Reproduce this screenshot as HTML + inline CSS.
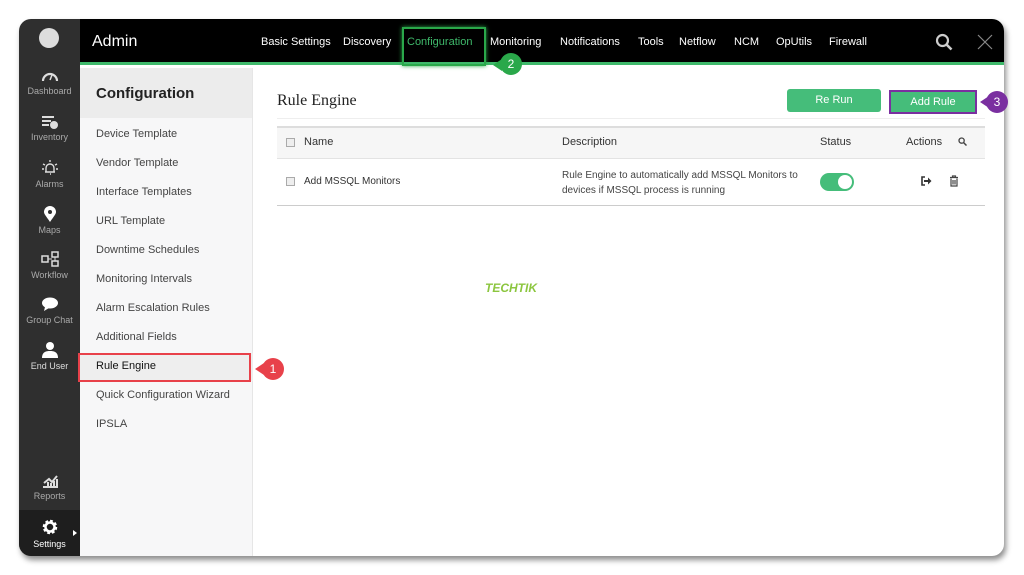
<!DOCTYPE html>
<html><head><style>
*{margin:0;padding:0;box-sizing:border-box}
body{width:1024px;height:575px;background:#fff;font-family:"Liberation Sans",sans-serif;position:relative;overflow:hidden}
.frame{position:absolute;left:19px;top:19px;width:985px;height:537px;border-radius:12px;overflow:hidden;box-shadow:2px 4px 6px rgba(0,0,0,.45);background:#fff}
.side{position:absolute;left:0;top:0;width:61px;height:537px;background:#2f2f2f}
.top{position:absolute;left:61px;top:0;right:0;height:46px;background:#000;border-bottom:3px solid #3fb96b}
.sitem{position:absolute;left:0;width:61px;text-align:center;color:#aaa;font-size:9px}
.sitem svg{display:block;margin:0 auto 3px}
.cfg{position:absolute;left:61px;top:49px;width:173px;bottom:0;background:#f7f7f8;border-right:1px solid #e6e6e6}
.cfgh{height:50px;background:#ececec;font-size:15px;font-weight:bold;color:#222;padding:17px 0 0 16px}
.cfg div.i{position:absolute;left:16px;font-size:11px;color:#444}
.nav{position:absolute;top:17px;font-size:11px;color:#fff}
</style></head><body>
<div class="frame">
 <div class="side">
  <div style="position:absolute;left:20px;top:9px;width:20px;height:20px;border-radius:50%;background:#ddd"></div>
  <div class="sitem" style="top:50px"><svg width="18" height="14" viewBox="0 0 18 14"><path d="M2 12A7 7 0 1 1 16 12" fill="none" stroke="#ddd" stroke-width="2.2"/><path d="M9 11L11 6" stroke="#ddd" stroke-width="1.5"/></svg>Dashboard</div>
  <div class="sitem" style="top:96px"><svg width="18" height="14" viewBox="0 0 18 14"><path d="M1 2H13M1 6H10M1 10H8" stroke="#ddd" stroke-width="2"/><circle cx="13" cy="10" r="4" fill="#ddd"/></svg>Inventory</div>
  <div class="sitem" style="top:141px"><svg width="18" height="16" viewBox="0 0 18 16"><path d="M5 12V8A4 4 0 0 1 13 8V12H4M14 12H4M9 14h1M2 4l2 1M16 4l-2 1M9 0v2M1 9h2M15 9h2" stroke="#ddd" stroke-width="1.4" fill="none"/></svg>Alarms</div>
  <div class="sitem" style="top:187px"><svg width="14" height="16" viewBox="0 0 14 16"><path d="M7 16C3 10 1 8 1 6A6 6 0 0 1 13 6C13 8 11 10 7 16Z" fill="#fff"/><circle cx="7" cy="6" r="2" fill="#2f2f2f"/></svg>Maps</div>
  <div class="sitem" style="top:232px"><svg width="18" height="16" viewBox="0 0 18 16"><rect x="1" y="5" width="6" height="6" fill="none" stroke="#ddd" stroke-width="1.5"/><rect x="11" y="1" width="6" height="5" fill="none" stroke="#ddd" stroke-width="1.5"/><rect x="11" y="10" width="6" height="5" fill="none" stroke="#ddd" stroke-width="1.5"/><path d="M7 8H11M14 6V10" stroke="#ddd"/></svg>Workflow</div>
  <div class="sitem" style="top:278px"><svg width="18" height="15" viewBox="0 0 18 15"><ellipse cx="9" cy="6" rx="8" ry="5.5" fill="#fff"/><path d="M4 10L3 14L8 11Z" fill="#fff"/></svg>Group Chat</div>
  <div class="sitem" style="top:323px;color:#ddd"><svg width="16" height="16" viewBox="0 0 16 16"><circle cx="8" cy="4" r="4" fill="#fff"/><path d="M0 16C0 10 4 9 8 9S16 10 16 16Z" fill="#fff"/></svg>End User</div>
  <div class="sitem" style="top:454px"><svg width="18" height="15" viewBox="0 0 18 15"><path d="M2 14H17M3 10L8 6L11 9L16 3" stroke="#ddd" stroke-width="2" fill="none"/><path d="M7 14V9M10 14V10M13 14V8M16 14V6" stroke="#ddd" stroke-width="2"/></svg>Reports</div>
  <div style="position:absolute;left:0;top:491px;width:61px;height:46px;background:#1e1e1e"></div>
  <div class="sitem" style="top:499px;color:#fff"><svg width="18" height="18" viewBox="0 0 18 18"><circle cx="9" cy="9" r="5.5" fill="none" stroke="#fff" stroke-width="3.5" stroke-dasharray="2.5 1.8"/><circle cx="9" cy="9" r="4.5" fill="none" stroke="#fff" stroke-width="2.5"/></svg>Settings</div>
  <div style="position:absolute;left:54px;top:511px;border-left:4px solid #fff;border-top:3px solid transparent;border-bottom:3px solid transparent"></div>
 </div>
 <div class="top">
  <div style="position:absolute;left:12px;top:14px;color:#fff;font-size:16px">Admin</div>
  <div class="nav" style="left:181px">Basic Settings</div>
  <div class="nav" style="left:263px">Discovery</div>
  <div class="nav" style="left:327px;color:#3fb96b">Configuration</div>
  <div class="nav" style="left:410px">Monitoring</div>
  <div class="nav" style="left:480px">Notifications</div>
  <div class="nav" style="left:558px">Tools</div>
  <div class="nav" style="left:599px">Netflow</div>
  <div class="nav" style="left:654px">NCM</div>
  <div class="nav" style="left:696px">OpUtils</div>
  <div class="nav" style="left:749px">Firewall</div>
  <svg style="position:absolute;left:855px;top:14px" width="18" height="18" viewBox="0 0 18 18"><circle cx="7.5" cy="7.5" r="5.5" fill="none" stroke="#ccc" stroke-width="2.2"/><path d="M11.5 11.5L16.5 16.5" stroke="#ccc" stroke-width="2.6"/></svg>
  <svg style="position:absolute;left:897px;top:15px" width="16" height="16" viewBox="0 0 16 16"><path d="M1 1L15 15M15 1L1 15" stroke="#888" stroke-width="1.2"/></svg>
 </div>
 <div class="cfg">
  <div class="cfgh">Configuration</div>
  <div class="i" style="top:60px">Device Template</div>
  <div class="i" style="top:89px">Vendor Template</div>
  <div class="i" style="top:118px">Interface Templates</div>
  <div class="i" style="top:147px">URL Template</div>
  <div class="i" style="top:176px">Downtime Schedules</div>
  <div class="i" style="top:205px">Monitoring Intervals</div>
  <div class="i" style="top:234px">Alarm Escalation Rules</div>
  <div class="i" style="top:263px">Additional Fields</div>
  <div style="position:absolute;left:0;top:285px;width:173px;height:28px;background:#eee"></div>
  <div class="i" style="top:292px;color:#111">Rule Engine</div>
  <div class="i" style="top:321px">Quick Configuration Wizard</div>
  <div class="i" style="top:350px">IPSLA</div>
 </div>
 <div style="position:absolute;left:258px;top:73px;font-family:'Liberation Serif',serif;font-size:16px;color:#222">Rule Engine</div>
 <div style="position:absolute;left:768px;top:70px;width:94px;height:23px;background:#45bd7a;border-radius:3px;color:#fff;font-size:11px;text-align:center;line-height:23px">Re Run</div>
 <div style="position:absolute;left:870px;top:71px;width:88px;height:24px;background:#45bd7a;color:#fff;font-size:11px;text-align:center;line-height:20px;border:2px solid #7a2fa0">Add Rule</div>
 <div style="position:absolute;left:258px;top:99px;width:708px;border-top:1px solid #eee"></div>
 <div style="position:absolute;left:258px;top:107px;width:708px;height:33px;background:#f6f6f6;border-top:2px solid #ddd;border-bottom:1px solid #e3e3e3"></div>
 <div style="position:absolute;left:267px;top:119px;width:9px;height:9px;border:1px solid #aaa;background:#eee"></div>
 <div style="position:absolute;left:285px;top:117px;font-size:11px;color:#333">Name</div>
 <div style="position:absolute;left:543px;top:117px;font-size:11px;color:#333">Description</div>
 <div style="position:absolute;left:801px;top:117px;font-size:11px;color:#333">Status</div>
 <div style="position:absolute;left:887px;top:117px;font-size:11px;color:#333">Actions</div>
 <svg style="position:absolute;left:939px;top:118px" width="9" height="9" viewBox="0 0 9 9"><circle cx="3.6" cy="3.6" r="2.6" fill="none" stroke="#444" stroke-width="1.3"/><path d="M5.5 5.5L8.5 8.5" stroke="#444" stroke-width="1.5"/></svg>
 <div style="position:absolute;left:267px;top:158px;width:9px;height:9px;border:1px solid #aaa;background:#eee"></div>
 <div style="position:absolute;left:285px;top:157px;font-size:10px;color:#333">Add MSSQL Monitors</div>
 <div style="position:absolute;left:543px;top:149px;font-size:10px;color:#444;line-height:15px;width:240px">Rule Engine to automatically add MSSQL Monitors to devices if MSSQL process is running</div>
 <div style="position:absolute;left:801px;top:154px;width:34px;height:18px;border-radius:9px;background:#45bd7a"><div style="position:absolute;right:2px;top:2px;width:14px;height:14px;border-radius:50%;background:#fff"></div></div>
 <svg style="position:absolute;left:902px;top:157px" width="11" height="10" viewBox="0 0 11 10"><path d="M4 1H1V9H4" fill="none" stroke="#333" stroke-width="1.6"/><path d="M3 4H7V1.5L10.5 5L7 8.5V6H3Z" fill="#333"/></svg>
 <svg style="position:absolute;left:930px;top:156px" width="10" height="12" viewBox="0 0 10 12"><path d="M1 2.5H9M3.5 2.5V1H6.5V2.5M2 3.5V11H8V3.5M4 5V9.5M6 5V9.5" fill="none" stroke="#444" stroke-width="1.2"/></svg>
 <div style="position:absolute;left:258px;top:186px;width:708px;border-top:1px solid #ccc"></div>
 <div style="position:absolute;left:466px;top:262px;font-size:12px;font-weight:bold;color:#8cc63f;font-style:italic">TECHTIK</div>
</div>
<div style="position:absolute;left:78px;top:353px;width:173px;height:29px;border:2px solid #e8414a"></div>
<div style="position:absolute;left:255px;top:363px;border-right:9px solid #e8414a;border-top:6px solid transparent;border-bottom:6px solid transparent"></div>
<div style="position:absolute;left:262px;top:358px;width:22px;height:22px;border-radius:50%;background:#e8414a;color:#fff;font-size:12px;text-align:center;line-height:22px">1</div>
<div style="position:absolute;left:402px;top:27px;width:84px;height:39px;border:2px solid #2aa84a;box-shadow:0 0 4px #2aa84a"></div>
<div style="position:absolute;left:493px;top:59px;border-right:9px solid #2aa84a;border-top:6px solid transparent;border-bottom:6px solid transparent"></div>
<div style="position:absolute;left:500px;top:53px;width:22px;height:22px;border-radius:50%;background:#2aa84a;color:#fff;font-size:12px;text-align:center;line-height:22px">2</div>
<div style="position:absolute;left:980px;top:96px;border-right:9px solid #7a2fa0;border-top:6px solid transparent;border-bottom:6px solid transparent"></div>
<div style="position:absolute;left:986px;top:91px;width:22px;height:22px;border-radius:50%;background:#7a2fa0;color:#fff;font-size:12px;text-align:center;line-height:22px">3</div>
</body></html>
